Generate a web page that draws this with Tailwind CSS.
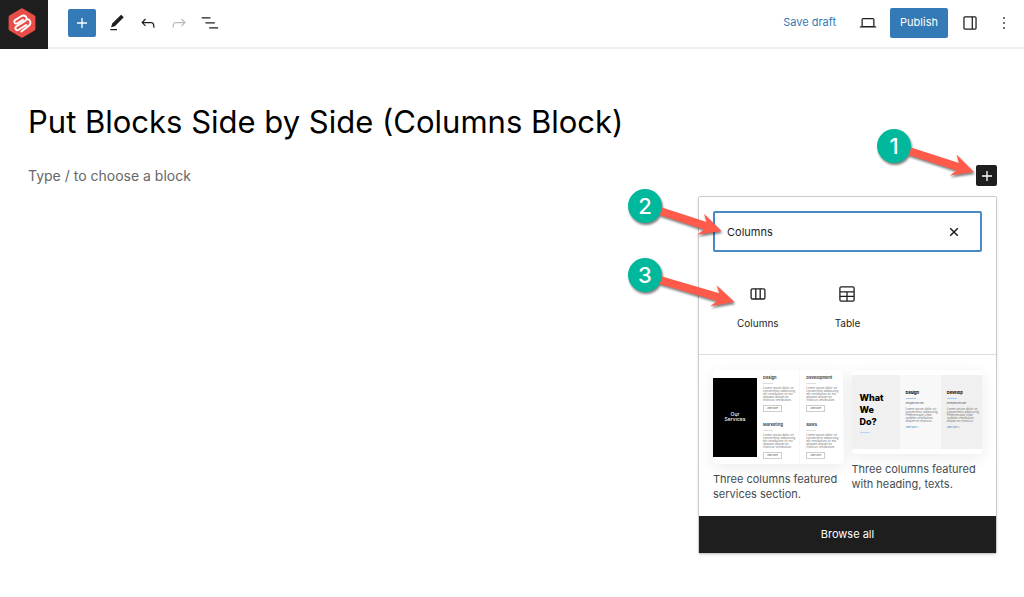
<!DOCTYPE html>
<html lang="en">
  <head>
    <meta charset="UTF-8" />
    <meta name="viewport" content="width=device-width, initial-scale=1.0" />
    <title>Edit page: Put Blocks Side by Side</title>
    <script src="https://cdn.jsdelivr.net/npm/@tailwindcss/browser@4"></script>
  </head>
  <body class="min-h-screen bg-white font-['Inter',sans-serif] text-[#1e1e1e]">
    <header
      class="flex items-center justify-between border-b-2 border-[#f0f0f0] pr-2.5"
    >
      <div class="flex items-center">
        <a
          href="#"
          aria-label="View pages"
          class="-mb-0.5 mr-5 flex h-[49px] w-12 items-center justify-center bg-[#1e1e1e] pr-1 pb-1"
        >
          <svg class="h-8 w-7" viewBox="0 0 28 32">
            <path
              d="M13.2 1.5Q14 1 14.8 1.5L26.6 8.4Q27.4 9 27.4 10V22Q27.4 23 26.6 23.5L14.8 30.5Q14 31 13.2 30.5L1.4 23.5Q.6 23 .6 22V10Q.6 9 1.4 8.4Z"
              fill="#e84e47"
            />
            <path
              d="M15 12.8 9.2 16.4C6.8 17.6 5.2 14.3 7.4 12.9L13.2 9.3C17 7 20.6 11 17.2 13.9L8.6 19.2C6 21 8 24.2 10.6 22.7L18.4 17.9M18.2 12.4C22.2 11.4 24 16.4 20.6 18.9L13.4 24.4"
              fill="none"
              stroke="#fff"
              stroke-width="1.9"
              stroke-linecap="round"
              stroke-linejoin="round"
            />
          </svg>
        </a>
        <div class="flex items-center gap-[11px] pb-0.5">
          <button
            aria-label="Toggle block inserter"
            class="flex size-7 items-center justify-center rounded-[2px] bg-[#337ab7] text-white"
          >
            <svg class="size-5" viewBox="0 0 24 24" fill="currentColor">
              <path d="M18 11.2h-5.2V6h-1.6v5.2H6v1.6h5.2V18h1.6v-5.2H18z" />
            </svg>
          </button>
          <button aria-label="Tools">
            <svg class="size-5" viewBox="0 0 24 24" fill="currentColor">
              <path
                d="M20.1 5.1L16.9 2 6.2 12.7l-1.3 4.4 4.5-1.3L20.1 5.1zM4 20.8h8v-1.5H4v1.5z"
              />
            </svg>
          </button>
          <button aria-label="Undo">
            <svg class="size-5" viewBox="0 0 24 24" fill="currentColor">
              <path
                d="M18.3 11.7c-.6-.6-1.4-.9-2.3-.9H6.7l2.9-3.3-1.1-1-4.5 5L8.5 16l1-1-2.7-2.7H16c.5 0 .9.2 1.3.5 1 1 1 3.4 1 4.5v.3h1.5v-.2c0-1.5 0-4.3-1.5-5.7z"
              />
            </svg>
          </button>
          <button aria-label="Redo" class="text-[#bbb]" disabled>
            <svg class="size-5" viewBox="0 0 24 24" fill="currentColor">
              <path
                d="M15.6 6.5l-1.1 1 2.9 3.3H8c-.9 0-1.7.3-2.3.9-1.4 1.5-1.4 4.2-1.4 5.6v.2h1.5v-.3c0-1.1 0-3.5 1-4.5.3-.3.7-.5 1.3-.5h9.2L14.5 15l1.1 1.1 4.6-4.6-4.6-5z"
              />
            </svg>
          </button>
          <button aria-label="Document overview">
            <svg class="size-5" viewBox="0 0 24 24" fill="currentColor">
              <path
                d="M12.6 5.2H2v1.5h10.6V5.2zm-1.6 12v1.5h10.8v-1.5H11zm6.8-6H6.6v1.5h11.2v-1.5z"
              />
            </svg>
          </button>
        </div>
      </div>

      <div class="flex items-center gap-3 pb-0.5 text-[11px]">
        <button class="mr-2.5 text-[#337ab7]">Save draft</button>
        <button aria-label="Preview">
          <svg class="size-5" viewBox="0 0 24 24" fill="currentColor">
            <path
              d="M20.5 16h-.7V8c0-1.1-.9-2-2-2H6.2c-1.1 0-2 .9-2 2v8h-.7c-.8 0-1.5.7-1.5 1.5h20c0-.8-.7-1.5-1.5-1.5zM5.7 8c0-.3.2-.5.5-.5h11.6c.3 0 .5.2.5.5v7.6H5.7V8z"
            />
          </svg>
        </button>
        <button class="h-[30px] rounded-[2px] bg-[#337ab7] px-2.5 text-white">
          Publish
        </button>
        <button aria-label="Settings">
          <svg class="size-5" viewBox="0 0 24 24" fill="currentColor">
            <path
              d="M18 4H6c-1.1 0-2 .9-2 2v12c0 1.1.9 2 2 2h12c1.1 0 2-.9 2-2V6c0-1.1-.9-2-2-2zm-4 14.5H6c-.3 0-.5-.2-.5-.5V6c0-.3.2-.5.5-.5h8v13zm4.5-.5c0 .3-.2.5-.5.5h-2.5v-13H18c.3 0 .5.2.5.5v12z"
            />
          </svg>
        </button>
        <button aria-label="Options" class="ml-0.5">
          <svg class="size-5" viewBox="0 0 24 24" fill="currentColor">
            <path
              d="M13 19h-2v-2h2v2zm0-6h-2v-2h2v2zm0-6h-2V5h2v2z"
            />
          </svg>
        </button>
      </div>
    </header>

    <main class="flex flex-col pt-[53px] pr-[27px] pl-7">
      <h1 class="text-[31px] leading-10 text-black">
        Put Blocks Side by Side (Columns Block)
      </h1>
      <div class="mt-[23px] flex items-center justify-between">
        <p class="text-sm text-[#666]">Type / to choose a block</p>
        <button
          aria-label="Add block"
          class="flex size-[21px] items-center justify-center rounded-[2px] bg-[#1e1e1e] text-white"
        >
          <svg class="size-5" viewBox="0 0 24 24" fill="currentColor">
            <path d="M18 11.2h-5.2V6h-1.6v5.2H6v1.6h5.2V18h1.6v-5.2H18z" />
          </svg>
        </button>
      </div>

      <!-- Quick inserter -->
      <section
        class="relative mt-2.5 w-[299px] self-end rounded-[2px] border border-[#ccc] bg-white shadow-sm"
      >
        <div class="border-b border-[#ddd] px-3.5 pt-3.5">
          <div
            class="flex h-[41px] items-center justify-between rounded-[2px] border-2 border-[#4a8ac4] px-3"
          >
            <label for="block-search" class="hidden">Search</label>
            <input
              id="block-search"
              type="text"
              value="Columns"
              class="h-full w-40 text-[11px] outline-none"
            />
            <button aria-label="Reset search" class="mr-1">
              <svg
                class="size-5"
                viewBox="0 0 20 20"
                fill="none"
                stroke="currentColor"
                stroke-width="1.5"
              >
                <path d="m6.2 6.2 7.6 7.6m0-7.6-7.6 7.6" />
              </svg>
            </button>
          </div>
          <div class="mt-6 grid grid-cols-3 text-[10px] leading-[14px]">
            <button class="flex flex-col items-center gap-3 pt-2 pb-6">
              <svg
                class="size-5"
                viewBox="0 0 20 20"
                fill="none"
                stroke="currentColor"
                stroke-width="1.3"
              >
                <rect x="3.1" y="4.8" width="13.8" height="10.2" rx="1.3" />
                <path d="M7.8 4.8V15M12.2 4.8V15" />
              </svg>
              Columns
            </button>
            <button class="flex flex-col items-center gap-3 pt-2 pb-6">
              <svg
                class="size-5"
                viewBox="0 0 20 20"
                fill="none"
                stroke="currentColor"
                stroke-width="1.3"
              >
                <rect x="2.9" y="2.9" width="14.2" height="14.2" rx="1.3" />
                <path d="M2.9 7.8h14.2M2.9 12.4h14.2M10 7.8v9.3" />
              </svg>
              Table
            </button>
          </div>
        </div>

        <!-- Patterns -->
        <div
          class="grid grid-cols-2 items-start gap-2 px-3.5 pt-[15px] pb-3.5 text-[11px] leading-[15px] text-[#444b50]"
        >
          <a href="#" class="flex flex-col gap-2">
            <div
              class="flex h-[94px] items-center rounded bg-white text-[3px] leading-[3px] shadow-[0_4px_16px_rgba(0,0,0,0.08)]"
            >
              <div
                class="flex h-[79px] w-11 shrink-0 items-center justify-center bg-black text-center text-[5px] leading-[5px] font-medium text-white"
              >
                Our<br />Services
              </div>
              <div
                class="grid h-full flex-1 grid-cols-2 grid-rows-2 divide-x divide-[#f7f7f7] overflow-hidden whitespace-nowrap"
              >
                <div class="flex flex-col items-start gap-[3px] pt-1.5 pl-1.5">
                  <b class="text-[4px] leading-[4px]">Design</b>
                  <span class="w-2.5 border-b border-[#ddd]"></span>
                  <p class="text-[#777]">Lorem ipsum dolor sit<br />consectetur adipiscing<br />elit vestibulum sit est<br />aliquam aliquet mi<br />rhoncus vestibulum.</p>
                  <span class="border border-[#ccc] px-[3px] py-px text-[2px]">Learn More</span>
                </div>
                <div class="flex flex-col items-start gap-[3px] pt-1.5 pl-1.5">
                  <b class="text-[4px] leading-[4px]">Development</b>
                  <span class="w-2.5 border-b border-[#ddd]"></span>
                  <p class="text-[#777]">Lorem ipsum dolor sit<br />consectetur adipiscing<br />elit vestibulum sit est<br />aliquam aliquet mi<br />rhoncus vestibulum.</p>
                  <span class="border border-[#ccc] px-[3px] py-px text-[2px]">Learn More</span>
                </div>
                <div class="flex flex-col items-start gap-[3px] pt-1.5 pl-1.5">
                  <b class="text-[4px] leading-[4px]">Marketing</b>
                  <span class="w-2.5 border-b border-[#ddd]"></span>
                  <p class="text-[#777]">Lorem ipsum dolor sit<br />consectetur adipiscing<br />elit vestibulum sit est<br />aliquam aliquet mi<br />rhoncus vestibulum.</p>
                  <span class="border border-[#ccc] px-[3px] py-px text-[2px]">Learn More</span>
                </div>
                <div class="flex flex-col items-start gap-[3px] pt-1.5 pl-1.5">
                  <b class="text-[4px] leading-[4px]">Sales</b>
                  <span class="w-2.5 border-b border-[#ddd]"></span>
                  <p class="text-[#777]">Lorem ipsum dolor sit<br />consectetur adipiscing<br />elit vestibulum sit est<br />aliquam aliquet mi<br />rhoncus vestibulum.</p>
                  <span class="border border-[#ccc] px-[3px] py-px text-[2px]">Learn More</span>
                </div>
              </div>
            </div>
            <p>Three columns featured services section.</p>
          </a>
          <a href="#" class="flex flex-col gap-2">
            <div
              class="flex h-[84px] overflow-hidden rounded bg-white py-[5px] text-[3px] leading-[3px] whitespace-nowrap shadow-[0_4px_16px_rgba(0,0,0,0.08)]"
            >
              <div class="flex w-12 flex-col items-start justify-center bg-[#f0f0f0] pl-2">
                <b class="text-[9px] leading-3 font-extrabold text-black">What<br />We<br />Do?</b>
                <span class="mt-1 w-2.5 border-b border-[#b9d3f0]"></span>
              </div>
              <div class="flex flex-1 flex-col items-start gap-[3px] bg-[#f8f8f8] pt-4 pl-1.5">
                <b class="text-[4px] leading-[4px] text-black">Design</b>
                <span class="w-2.5 border-b border-[#a5c8f0]"></span>
                <p class="text-[2px]">Designed with care</p>
                <p class="text-[#777]">Lorem ipsum dolor sit<br />consectetur adipiscing<br />Pellentesque vitae<br />sodales vestibulum<br />aliquet mi rhoncus</p>
                <span class="text-[2px] text-[#337ab7]">Learn More →</span>
              </div>
              <div class="flex flex-1 flex-col items-start gap-[3px] bg-[#f0f0f0] pt-4 pl-1.5">
                <b class="text-[4px] leading-[4px] text-black">Develop</b>
                <span class="w-2.5 border-b border-[#a5c8f0]"></span>
                <p class="text-[2px]">Developed with care</p>
                <p class="text-[#777]">Lorem ipsum dolor sit<br />consectetur adipiscing<br />Pellentesque vitae<br />sodales vestibulum<br />aliquet mi rhoncus</p>
                <span class="text-[2px] text-[#337ab7]">Learn More →</span>
              </div>
            </div>
            <p>Three columns featured with heading, texts.</p>
          </a>
        </div>

        <button class="h-[37px] w-full bg-[#1e1e1e] text-[11px] text-white">
          Browse all
        </button>

        <!-- Step markers -->
        <div class="absolute -top-[69px] left-[177px]">
          <svg class="h-14 w-28 drop-shadow-[1px_2px_1px_rgba(0,0,0,0.5)]" viewBox="-18 -18 112 56">
            <path d="M16.2 1.2 65 17 62.5 8.5 80 26 55.7 29.6 62.6 24.6 13.8 8.8Z" fill="#ff5a4a" />
            <circle r="17" fill="#00b89c" />
          </svg>
          <span class="absolute top-0 left-0 flex size-9 items-center justify-center text-[22px] font-medium text-white">1</span>
        </div>
        <div class="absolute -top-[9px] -left-[72px]">
          <svg class="h-14 w-28 drop-shadow-[1px_2px_1px_rgba(0,0,0,0.5)]" viewBox="-18 -18 112 56">
            <path d="M16.2 1.2 61.5 15.9 59 7.7 76.5 25 52.2 28.7 59.1 23.5 13.8 8.8Z" fill="#ff5a4a" />
            <circle r="17" fill="#00b89c" />
          </svg>
          <span class="absolute top-0 left-0 flex size-9 items-center justify-center text-[22px] font-medium text-white">2</span>
        </div>
        <div class="absolute top-[60px] -left-[72px]">
          <svg class="h-14 w-28 drop-shadow-[1px_2px_1px_rgba(0,0,0,0.5)]" viewBox="-18 -18 112 56">
            <path d="M16.2 1.2 74.3 18.3 71.6 10.2 89.5 27 65.2 31.2 72.1 25.9 13.8 8.8Z" fill="#ff5a4a" />
            <circle r="17" fill="#00b89c" />
          </svg>
          <span class="absolute top-0 left-0 flex size-9 items-center justify-center text-[22px] font-medium text-white">3</span>
        </div>
      </section>
    </main>
  </body>
</html>
